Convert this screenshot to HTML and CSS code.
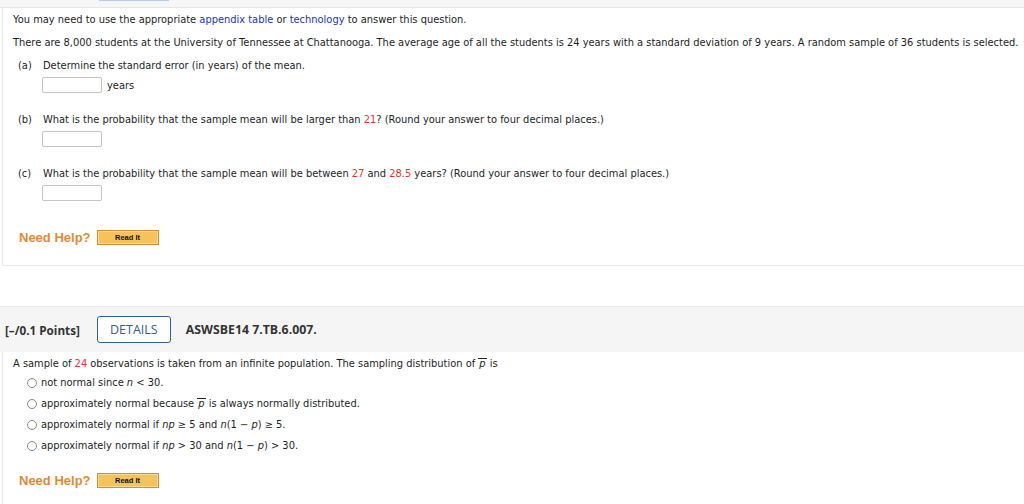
FILE: index.html
```html
<!DOCTYPE html>
<html>
<head>
<meta charset="utf-8">
<link rel="stylesheet" href="styles.css">
</head>
<body>
<div class="topstrip"><div class="tab"></div></div>
<div class="qbox first">
  <p class="line l1">You may need to use the appropriate <span class="link">appendix table</span> or <span class="link">technology</span> to answer this question.</p>
  <p class="line l2">There are 8,000 students at the University of Tennessee at Chattanooga. The average age of all the students is 24 years with a standard deviation of 9 years. A random sample of 36 students is selected.</p>
  <div class="part pa">
    <div class="line q"><span class="lbl">(a)</span><span>Determine the standard error (in years) of the mean.</span></div>
    <div class="ansrow"><span class="inp"></span><span class="unit">years</span></div>
  </div>
  <div class="part pb">
    <div class="line q"><span class="lbl">(b)</span><span>What is the probability that the sample mean will be larger than <span class="red">21</span>? (Round your answer to four decimal places.)</span></div>
    <div class="ansrow"><span class="inp"></span></div>
  </div>
  <div class="part pc">
    <div class="line q"><span class="lbl">(c)</span><span>What is the probability that the sample mean will be between <span class="red">27</span> and <span class="red">28.5</span> years? (Round your answer to four decimal places.)</span></div>
    <div class="ansrow"><span class="inp"></span></div>
  </div>
  <div class="help"><span class="need">Need Help?</span><span class="readit">Read It</span></div>
</div>

<div class="qhead">
  <span class="points">[–/0.1 Points]</span>
  <span class="details">DETAILS</span>
  <span class="code">ASWSBE14 7.TB.6.007.</span>
</div>
<div class="qbox second">
  <p class="line s1">A sample of <span class="red">24</span> observations is taken from an infinite population. The sampling distribution of <span class="pbar">p</span> is</p>
  <ul class="opts">
    <li><span class="radio"></span><span>not normal since <i>n</i> &lt; 30.</span></li>
    <li><span class="radio"></span><span>approximately normal because <span class="pbar">p</span> is always normally distributed.</span></li>
    <li><span class="radio"></span><span>approximately normal if <i>np</i> ≥ 5 and <i>n</i>(1 − <i>p</i>) ≥ 5.</span></li>
    <li><span class="radio"></span><span>approximately normal if <i>np</i> &gt; 30 and <i>n</i>(1 − <i>p</i>) &gt; 30.</span></li>
  </ul>
  <div class="help h2"><span class="need">Need Help?</span><span class="readit">Read It</span></div>
</div>
</body>
</html>
```

FILE: styles.css
```css
* { box-sizing: border-box; }
html, body { margin: 0; padding: 0; background: #fff; }
body {
  font-family: "DejaVu Sans", Verdana, sans-serif;
  font-size: 9.9px;
  color: #1e1e1e;
  width: 1024px;
  overflow: hidden;
}
p { margin: 0; }
.topstrip {
  height: 8px;
  background: #f6f6f6;
  border-bottom: 1px solid #e6e6e6;
}
.tab {
  margin-left: 99px;
  width: 70px;
  height: 1px;
  background: #b9cde3;
}
.qbox {
  margin-left: 2px;
  border-left: 1px solid #e8e8e8;
  padding-left: 10px;
}
.qbox.first {
  border-bottom: 1px solid #e6e6e6;
  padding-top: 5px;
  padding-bottom: 20px;
}
.line { line-height: 13px; white-space: nowrap; }
.l2 { margin-top: 10px; }
.link { color: #2233c4; }
.red { color: #e2332a; }
.part .q { display: flex; }
.lbl { width: 30px; padding-left: 5px; }
.pa { margin-top: 10px; }
.pb { margin-top: 20px; }
.pc { margin-top: 20px; }
.ansrow {
  display: flex;
  align-items: center;
  padding-left: 29px;
  margin-top: 5px;
  height: 16px;
}
.inp {
  display: block;
  width: 60px;
  height: 16px;
  border: 1px solid #c4c4c4;
  border-radius: 2px;
  background: #fff;
}
.unit { margin-left: 5px; }
.help {
  display: flex;
  align-items: center;
  height: 16px;
  margin-top: 28px;
  padding-left: 6px;
}
.need {
  font-family: "Liberation Sans", Arial, sans-serif;
  font-weight: bold;
  font-size: 13px;
  color: #e38a30;
}
.readit {
  margin-left: 6px;
  width: 62px;
  height: 15px;
  background: #f6c35a;
  border: 1px solid #d98c32;
  box-shadow: inset 0 0 0 1px #f9d98f;
  font-family: "Liberation Sans", Arial, sans-serif;
  font-weight: bold;
  font-size: 7.5px;
  color: #111;
  display: flex;
  align-items: center;
  justify-content: center;
}
.qhead {
  margin-top: 40px;
  height: 46px;
  background: #f5f5f5;
  border-top: 1px solid #ebebeb;
  display: flex;
  align-items: center;
  padding-left: 5px;
  font-family: "Open Sans", "Noto Sans", sans-serif;
  font-size: 11.7px;
  color: #333;
}
.points { font-weight: 700; }
.details {
  margin-left: 17px;
  width: 74px;
  height: 27px;
  border: 1px solid #2f6293;
  border-radius: 3px;
  background: #fff;
  color: #2f5f91;
  font-size: 12.5px;
  font-weight: 500;
  display: flex;
  align-items: center;
  justify-content: center;
}
.code { margin-left: 15px; font-weight: 700; font-size: 12.3px; }
.qbox.second { padding-top: 5px; padding-bottom: 20px; }
.pbar {
  font-style: italic;
  display: inline-block;
  border-top: 1px solid #222;
  line-height: 9px;
  padding: 0 1px;
}
.opts {
  list-style: none;
  margin: 0;
  padding: 0 0 0 14px;
}
.opts li {
  display: flex;
  align-items: center;
  height: 21px;
  white-space: nowrap;
}
.opts li:first-child { margin-top: 2px; }
.radio {
  width: 10px;
  height: 10px;
  border: 1px solid #8a8a8a;
  border-radius: 50%;
  margin-right: 4px;
  background: #fff;
}
.h2 { margin-top: 16px; }
```
